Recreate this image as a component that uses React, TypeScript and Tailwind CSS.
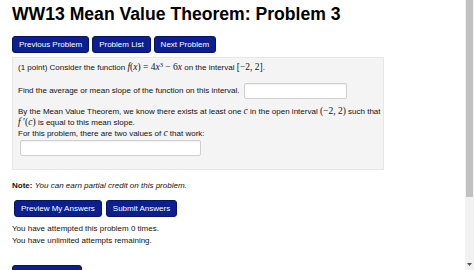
import React from "react";

const sans = "font-['Liberation_Sans',Arial,sans-serif]";
const serif = "font-['Liberation_Serif','Times_New_Roman',serif]";

function NavButton({ children }: { children: React.ReactNode }) {
  return (
    <button className="h-[17px] px-[6px] rounded-[3px] bg-[#0b1f8e] border border-[#061466] text-white text-[8px] leading-none">
      {children}
    </button>
  );
}

function AnswerBox({ width }: { width: string }) {
  return (
    <div
      className={`${width} h-[16px] bg-white border border-[#cfcfcf] rounded-[2px] shadow-[inset_0_1px_1px_rgba(0,0,0,0.06)]`}
    />
  );
}

function M({ children }: { children: React.ReactNode }) {
  return <span className={`${serif} text-[9.5px]`}>{children}</span>;
}

export default function App() {
  return (
    <div className={`flex w-[474px] h-[270px] overflow-hidden bg-white text-[#111] ${sans}`}>
      <div className="flex-1 pl-3 overflow-hidden">
        {/* Title */}
        <h1 className="pt-[2px] text-[17.6px] leading-[24px] font-bold text-black">
          WW13 Mean Value Theorem: Problem 3
        </h1>

        {/* Navigation */}
        <div className="mt-[10px] flex gap-[3px]">
          <NavButton>Previous Problem</NavButton>
          <NavButton>Problem List</NavButton>
          <NavButton>Next Problem</NavButton>
        </div>

        {/* Problem body */}
        <div className="mt-[4px] w-[372px] bg-[#f4f4f4] border border-[#e6e6e6] px-[5px] pt-[2px] pb-[13px] text-[8px]">
          <div className="h-[14px] flex items-center whitespace-nowrap">
            <span>
              (1 point) Consider the function{" "}
              <M>
                <i>f</i>(<i>x</i>) = 4<i>x</i>
                <span className="relative -top-[3px] text-[6.5px]">3</span> − 6<i>x</i>
              </M>{" "}
              on the interval <M>[−2, 2]</M>.
            </span>
          </div>

          <div className="mt-[9px] h-[16px] flex items-center gap-[5px]">
            <span>Find the average or mean slope of the function on this interval.</span>
            <AnswerBox width="w-[103px]" />
          </div>

          <div className="mt-[7px] leading-[11px]">
            <div className="whitespace-nowrap">
              By the Mean Value Theorem, we know there exists at least one <M><i>c</i></M> in the open
              interval <M>(−2, 2)</M> such that
            </div>
            <div>
              <M>
                <i>f</i> ′(<i>c</i>)
              </M>{" "}
              is equal to this mean slope.
            </div>
            <div>
              For this problem, there are two values of <M><i>c</i></M> that work:
            </div>
          </div>
          <div className="mt-[1px] pl-[2px]">
            <AnswerBox width="w-[181px]" />
          </div>
        </div>

        {/* Note */}
        <div className="mt-[10px] text-[8px] leading-[12px]">
          <b>Note:</b> <i>You can earn partial credit on this problem.</i>
        </div>

        {/* Submit buttons */}
        <div className="mt-[8px] ml-[2px] flex gap-[4px]">
          <NavButton>Preview My Answers</NavButton>
          <NavButton>Submit Answers</NavButton>
        </div>

        <div className="mt-[6px] text-[8px] leading-[12px]">
          <div>You have attempted this problem 0 times.</div>
          <div>You have unlimited attempts remaining.</div>
        </div>

        <div className="mt-[18px]">
          <div className="w-[70px] h-[17px] rounded-[3px] bg-[#0b1f8e] border border-[#061466]" />
        </div>
      </div>

      {/* Scrollbar */}
      <div className="w-[9px] flex flex-col bg-[#f1f1f1]">
        <div className="h-[197px] mx-[1px] bg-[#c1c1c1]" />
        <div className="flex-1 flex items-end justify-center pb-[4px]">
          <svg width="5" height="3" viewBox="0 0 5 3">
            <path d="M0 0 L5 0 L2.5 3 Z" fill="#505050" />
          </svg>
        </div>
      </div>
    </div>
  );
}
